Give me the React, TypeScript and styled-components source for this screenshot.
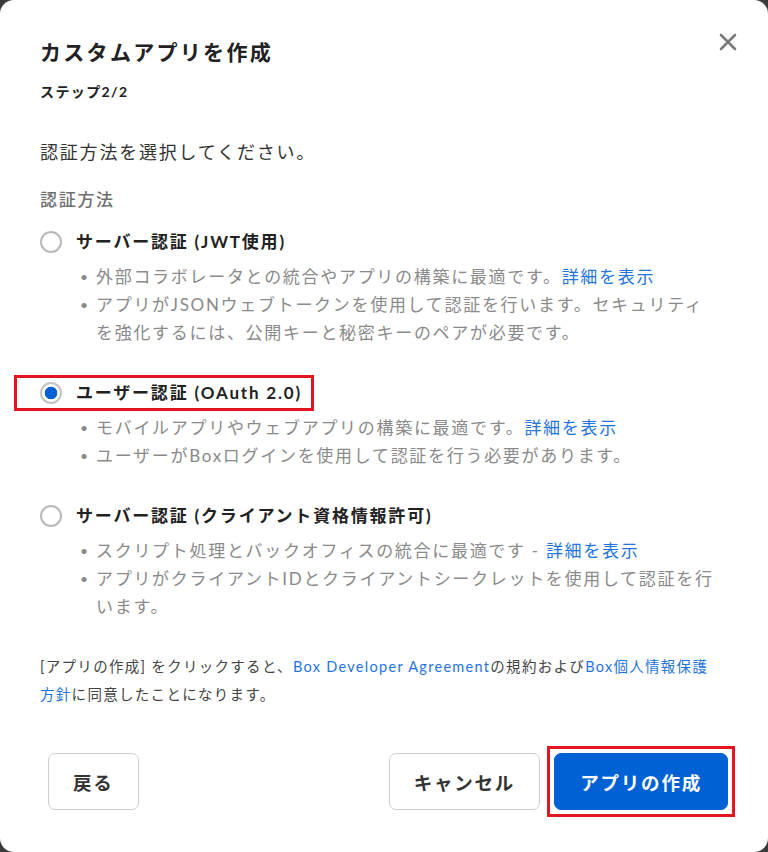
import React, { useState } from "react";
import styled, { createGlobalStyle } from "styled-components";

const GlobalStyle = createGlobalStyle`
  html, body {
    margin: 0;
    padding: 0;
    background: #3a3a3a;
  }
  body {
    font-family: Lato, "Noto Sans CJK JP", sans-serif;
  }
`;

type AuthOption = {
  id: string;
  label: string;
  bullets: { text: string; link?: boolean }[];
};

const OPTIONS: AuthOption[] = [
  {
    id: "jwt",
    label: "サーバー認証 (JWT使用)",
    bullets: [
      { text: "外部コラボレータとの統合やアプリの構築に最適です。", link: true },
      {
        text: "アプリがJSONウェブトークンを使用して認証を行います。セキュリティを強化するには、公開キーと秘密キーのペアが必要です。",
      },
    ],
  },
  {
    id: "oauth",
    label: "ユーザー認証 (OAuth 2.0)",
    bullets: [
      { text: "モバイルアプリやウェブアプリの構築に最適です。", link: true },
      { text: "ユーザーがBoxログインを使用して認証を行う必要があります。" },
    ],
  },
  {
    id: "cc",
    label: "サーバー認証 (クライアント資格情報許可)",
    bullets: [
      { text: "スクリプト処理とバックオフィスの統合に最適です - ", link: true },
      {
        text: "アプリがクライアントIDとクライアントシークレットを使用して認証を行います。",
      },
    ],
  },
];

export default function App() {
  const [selected, setSelected] = useState("oauth");

  return (
    <>
      <GlobalStyle />
      <Dialog>
        <Header>
          <Title>カスタムアプリを作成</Title>
          <CloseButton aria-label="閉じる">
            <svg width="18" height="18" viewBox="0 0 18 18">
              <path
                d="M2 2 L16 16 M16 2 L2 16"
                stroke="#7a7a7a"
                strokeWidth="2.6"
                strokeLinecap="round"
              />
            </svg>
          </CloseButton>
        </Header>
        <Step>ステップ2/2</Step>
        <Prompt>認証方法を選択してください。</Prompt>
        <SectionLabel>認証方法</SectionLabel>

        <OptionList>
          {OPTIONS.map((opt) => (
            <Option key={opt.id}>
              <OptionRow
                $highlighted={opt.id === "oauth"}
                onClick={() => setSelected(opt.id)}
              >
                <Radio $checked={selected === opt.id} />
                <OptionLabel>{opt.label}</OptionLabel>
              </OptionRow>
              <Bullets>
                {opt.bullets.map((b, i) => (
                  <Bullet key={i}>
                    <Dot>•</Dot>
                    <span>
                      {b.text}
                      {b.link && <Link href="#">詳細を表示</Link>}
                    </span>
                  </Bullet>
                ))}
              </Bullets>
            </Option>
          ))}
        </OptionList>

        <Agreement>
          [アプリの作成] をクリックすると、
          <Link href="#">Box Developer Agreement</Link>の規約および
          <Link href="#">Box個人情報保護方針</Link>に同意したことになります。
        </Agreement>

        <Footer>
          <Button>戻る</Button>
          <FooterRight>
            <Button>キャンセル</Button>
            <HighlightFrame>
              <Button $primary>アプリの作成</Button>
            </HighlightFrame>
          </FooterRight>
        </Footer>
      </Dialog>
    </>
  );
}

const Dialog = styled.div`
  box-sizing: border-box;
  width: 768px;
  height: 852px;
  background: #ffffff;
  border-radius: 14px;
  padding: 38px 40px 0 40px;
  display: flex;
  flex-direction: column;
  color: #222;
`;

const Header = styled.div`
  display: flex;
  justify-content: space-between;
  align-items: center;
  height: 28px;
`;

const Title = styled.h1`
  margin: 0;
  font-size: 21px;
  line-height: 28px;
  font-weight: 700;
  letter-spacing: 2.3px;
  color: #222;
`;

const CloseButton = styled.button`
  border: none;
  background: none;
  padding: 0;
  margin-right: -9px;
  margin-top: -20px;
  width: 18px;
  height: 18px;
  display: flex;
  cursor: pointer;
`;

const Step = styled.div`
  margin-top: 16px;
  font-size: 14px;
  line-height: 20px;
  font-weight: 700;
  letter-spacing: 1.4px;
  color: #222;
`;

const Prompt = styled.p`
  margin: 35px 0 0;
  font-size: 18px;
  line-height: 30px;
  letter-spacing: 1.8px;
  color: #333;
`;

const SectionLabel = styled.div`
  margin-top: 19px;
  font-size: 17px;
  line-height: 28px;
  font-weight: 500;
  letter-spacing: 1.7px;
  color: #6f6f6f;
`;

const OptionList = styled.div`
  margin-top: 13px;
  display: flex;
  flex-direction: column;
  gap: 31px;
`;

const Option = styled.div`
  display: flex;
  flex-direction: column;
`;

const OptionRow = styled.label<{ $highlighted?: boolean }>`
  display: flex;
  align-items: center;
  gap: 14px;
  height: 30px;
  cursor: pointer;
  width: fit-content;
  ${(p) =>
    p.$highlighted &&
    `
    margin-left: -23px;
    padding: 0 9px 0 23px;
    outline: 3px solid #e3161f;
  `}
`;

const Radio = styled.span<{ $checked: boolean }>`
  box-sizing: border-box;
  width: 22px;
  height: 22px;
  border-radius: 50%;
  border: 2px solid ${(p) => (p.$checked ? "#c4c4c4" : "#b8b8b8")};
  background: ${(p) =>
    p.$checked
      ? "radial-gradient(circle, #0061d5 0 6px, #ffffff 6.6px)"
      : "#ffffff"};
  flex-shrink: 0;
`;

const OptionLabel = styled.span`
  font-size: 17px;
  line-height: 30px;
  font-weight: 700;
  letter-spacing: 1.8px;
  color: #222;
`;

const Bullets = styled.ul`
  list-style: none;
  margin: 6px 0 0 40px;
  padding: 0;
  width: 636px;
`;

const Bullet = styled.li`
  display: grid;
  grid-template-columns: 16px 1fr;
  font-size: 17px;
  line-height: 28px;
  letter-spacing: 1.7px;
  color: #8a8a8a;
`;

const Dot = styled.span`
  color: #8a8a8a;
  font-size: 14px;
  letter-spacing: 0;
`;

const Link = styled.a`
  color: #1f74e0;
  text-decoration: none;
`;

const Agreement = styled.p`
  margin: 32px 0 0;
  max-width: 676px;
  font-size: 14.5px;
  line-height: 28px;
  letter-spacing: 1.3px;
  color: #444;
`;

const Footer = styled.div`
  margin-top: 37px;
  padding-left: 8px;
  display: flex;
  justify-content: space-between;
  align-items: center;
`;

const FooterRight = styled.div`
  display: flex;
  align-items: center;
  gap: 7px;
`;

const HighlightFrame = styled.span`
  display: inline-flex;
  padding: 4px;
  margin-right: -7px;
  border: 3px solid #e3161f;
`;

const Button = styled.button<{ $primary?: boolean }>`
  box-sizing: border-box;
  height: 57px;
  padding: 0 ${(p) => (p.$primary ? "25px" : "24px")};
  border-radius: 7px;
  border: 1px solid ${(p) => (p.$primary ? "#0061d5" : "#cfcfcf")};
  background: ${(p) => (p.$primary ? "#0061d5" : "#ffffff")};
  color: ${(p) => (p.$primary ? "#ffffff" : "#333")};
  font-family: Lato, "Noto Sans CJK JP", sans-serif;
  font-size: 18.5px;
  font-weight: 700;
  letter-spacing: 1.8px;
  cursor: pointer;
`;
